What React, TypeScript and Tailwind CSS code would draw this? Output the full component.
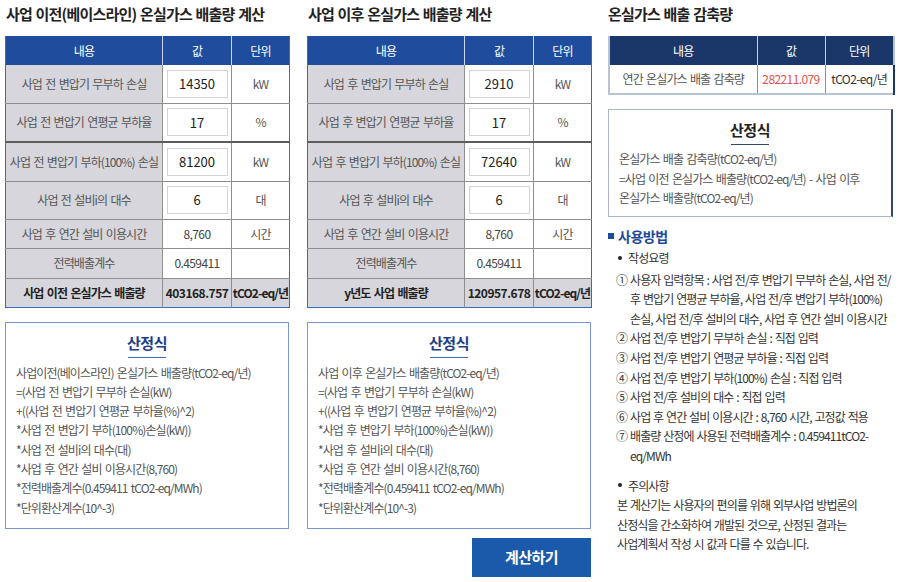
import React from "react";

type Row = {
  label: string;
  value: string;
  unit: string;
  input?: boolean;
  h: string;
  thick?: boolean;
};

const beforeRows: Row[] = [
  { label: "사업 전 변압기 무부하 손실", value: "14350", unit: "kW", input: true, h: "h-[38px]" },
  { label: "사업 전 변압기 연평균 부하율", value: "17", unit: "%", input: true, h: "h-[39px]" },
  { label: "사업 전 변압기 부하(100%) 손실", value: "81200", unit: "kW", input: true, h: "h-[39px]", thick: true },
  { label: "사업 전 설비i의 대수", value: "6", unit: "대", input: true, h: "h-[38px]" },
  { label: "사업 후 연간 설비 이용시간", value: "8,760", unit: "시간", h: "h-[29px]" },
  { label: "전력배출계수", value: "0.459411", unit: "", h: "h-[30px]" },
];

const afterRows: Row[] = [
  { label: "사업 후 변압기 무부하 손실", value: "2910", unit: "kW", input: true, h: "h-[38px]" },
  { label: "사업 후 변압기 연평균 부하율", value: "17", unit: "%", input: true, h: "h-[39px]" },
  { label: "사업 후 변압기 부하(100%) 손실", value: "72640", unit: "kW", input: true, h: "h-[39px]", thick: true },
  { label: "사업 후 설비i의 대수", value: "6", unit: "대", input: true, h: "h-[38px]" },
  { label: "사업 후 연간 설비 이용시간", value: "8,760", unit: "시간", h: "h-[29px]" },
  { label: "전력배출계수", value: "0.459411", unit: "", h: "h-[30px]" },
];

const beforeFormula = [
  "사업이전(베이스라인) 온실가스 배출량(tCO2-eq/년)",
  "=(사업 전 변압기 무부하 손실(kW)",
  "+((사업 전 변압기 연평균 부하율(%)^2)",
  "*사업 전 변압기 부하(100%)손실(kW))",
  "*사업 전 설비i의 대수(대)",
  "*사업 후 연간 설비 이용시간(8,760)",
  "*전력배출계수(0.459411 tCO2-eq/MWh)",
  "*단위환산계수(10^-3)",
];

const afterFormula = [
  "사업 이후 온실가스 배출량(tCO2-eq/년)",
  "=(사업 후 변압기 무부하 손실(kW)",
  "+((사업 후 변압기 연평균 부하율(%)^2)",
  "*사업 후 변압기 부하(100%)손실(kW))",
  "*사업 후 설비i의 대수(대)",
  "*사업 후 연간 설비 이용시간(8,760)",
  "*전력배출계수(0.459411 tCO2-eq/MWh)",
  "*단위환산계수(10^-3)",
];

const steps: { mark: string; lines: string[] }[] = [
  {
    mark: "①",
    lines: [
      "사용자 입력항목 : 사업 전/후 변압기 무부하 손실, 사업 전/",
      "후 변압기 연평균 부하율, 사업 전/후 변압기 부하(100%)",
      "손실, 사업 전/후 설비의 대수, 사업 후 연간 설비 이용시간",
    ],
  },
  { mark: "②", lines: ["사업 전/후 변압기 무부하 손실 : 직접 입력"] },
  { mark: "③", lines: ["사업 전/후 변압기 연평균 부하율 : 직접 입력"] },
  { mark: "④", lines: ["사업 전/후 변압기 부하(100%) 손실 : 직접 입력"] },
  { mark: "⑤", lines: ["사업 전/후 설비의 대수 : 직접 입력"] },
  { mark: "⑥", lines: ["사업 후 연간 설비 이용시간 : 8,760 시간, 고정값 적용"] },
  { mark: "⑦", lines: ["배출량 산정에 사용된 전력배출계수 : 0.459411tCO2-", "eq/MWh"] },
];

function Title({ children }: { children: React.ReactNode }) {
  return (
    <h2 className="h-[36px] pt-[4px] text-[15px] leading-[20px] font-bold text-[#222] tracking-[-0.8px] [word-spacing:1px]">
      {children}
    </h2>
  );
}

function CalcTable({ rows, totalLabel, totalValue }: { rows: Row[]; totalLabel: string; totalValue: string }) {
  return (
    <table className="w-[284px] border-collapse table-fixed border-x border-b border-[#3d68b8] text-[12px] tracking-[-0.9px] [word-spacing:1.5px]">
      <colgroup>
        <col className="w-[157px]" />
        <col className="w-[69px]" />
        <col className="w-[58px]" />
      </colgroup>
      <thead>
        <tr className="h-[29px] bg-[#1f4c9c] text-white">
          <th className="font-normal border-r border-[#c9d6ee]">내용</th>
          <th className="font-normal border-r border-[#c9d6ee]">값</th>
          <th className="font-normal">단위</th>
        </tr>
      </thead>
      <tbody>
        {rows.map((r, i) => (
          <tr
            key={r.label}
            className={`${r.h} ${i === 0 ? "" : r.thick ? "border-t-2 border-[#5c5c5c]" : "border-t border-[#8e8e8e]"}`}
          >
            <td className="bg-[#d6d6dc] text-center text-[#555] border-r border-[#8e8e8e] whitespace-nowrap">{r.label}</td>
            <td className="bg-white text-center border-r border-[#8e8e8e]">
              {r.input ? (
                <div className="mx-auto w-[61px] h-[28px] border border-[#d4d4d4] flex items-center justify-center text-[13px] text-[#222] tracking-normal">
                  {r.value}
                </div>
              ) : (
                <span className="text-[12px] text-[#444] tracking-[-0.6px]">{r.value}</span>
              )}
            </td>
            <td className="bg-white text-center text-[#555]">{r.unit}</td>
          </tr>
        ))}
        <tr className="h-[29px] border-t border-[#8e8e8e] bg-[#d6d6dc] font-bold text-[#222]">
          <td className="text-center border-r border-[#8e8e8e] whitespace-nowrap">{totalLabel}</td>
          <td className="text-center border-r border-[#8e8e8e] tracking-[-0.5px] whitespace-nowrap">{totalValue}</td>
          <td className="text-center tracking-[-0.9px] whitespace-nowrap px-0">tCO2-eq/년</td>
        </tr>
      </tbody>
    </table>
  );
}

function FormulaBox({ lines, className }: { lines: string[]; className: string }) {
  return (
    <div className={`border bg-white ${className}`}>
      <div className="flex flex-col items-center">
        <div className="text-[15px] font-bold text-[#1d3f86] leading-[20px] tracking-[-0.5px]">산정식</div>
        <div className="mt-[4px] w-[38px] h-[1px] bg-[#3d68b8]" />
      </div>
      <div className="mt-[5px] text-[12px] leading-[19.3px] text-[#555] tracking-[-0.9px] [word-spacing:1.5px]">
        {lines.map((l) => (
          <div key={l}>{l}</div>
        ))}
      </div>
    </div>
  );
}

function Dot({ children }: { children: React.ReactNode }) {
  return (
    <div className="pl-[10px] flex items-center">
      <span className="inline-block w-[4px] h-[4px] rounded-full bg-[#222] mr-[6px]" />
      {children}
    </div>
  );
}

export default function App() {
  return (
    <div className="w-[900px] h-[582px] bg-white font-['Noto_Sans_CJK_KR','Noto_Sans',sans-serif] flex pl-[5px]">
      <div className="w-[284px] flex flex-col">
        <div className="pl-[1px]">
          <Title>사업 이전(베이스라인) 온실가스 배출량 계산</Title>
        </div>
        <CalcTable rows={beforeRows} totalLabel="사업 이전 온실가스 배출량" totalValue="403168.757" />
        <FormulaBox
          lines={beforeFormula}
          className="mt-[14px] h-[207px] border-[#7a98d0] pt-[10px] px-[10px]"
        />
      </div>

      <div className="w-[284px] ml-[18px] flex flex-col">
        <div className="pl-[1px]">
          <Title>사업 이후 온실가스 배출량 계산</Title>
        </div>
        <CalcTable rows={afterRows} totalLabel="y년도 사업 배출량" totalValue="120957.678" />
        <FormulaBox
          lines={afterFormula}
          className="mt-[14px] h-[207px] border-[#7a98d0] pt-[10px] px-[10px]"
        />
        <div className="mt-[9px] flex justify-end">
          <button className="w-[119px] h-[39px] bg-[#1b5aaa] text-white text-[15px] font-bold tracking-[-0.5px]">
            계산하기
          </button>
        </div>
      </div>

      <div className="w-[285px] ml-[17px] flex flex-col">
        <Title>온실가스 배출 감축량</Title>
        <table className="w-[285px] border-collapse table-fixed border-x-2 border-b-2 border-[#b9c3d6] text-[12px] tracking-[-0.9px] [word-spacing:1.5px]">
          <colgroup>
            <col className="w-[148px]" />
            <col className="w-[68px]" />
            <col className="w-[69px]" />
          </colgroup>
          <thead>
            <tr className="h-[29px] bg-[#1b3769] text-white">
              <th className="font-normal border-r border-[#c9d0de]">내용</th>
              <th className="font-normal border-r border-[#c9d0de]">값</th>
              <th className="font-normal">단위</th>
            </tr>
          </thead>
          <tbody>
            <tr className="h-[29px]">
              <td className="text-center text-[#555] border-r border-[#8e8e8e] whitespace-nowrap">연간 온실가스 배출 감축량</td>
              <td className="text-center text-[#e5514f] border-r border-[#8e8e8e] tracking-[-0.6px]">282211.079</td>
              <td className="text-center text-[#333] border-r-2 border-[#1b3769] tracking-[-0.6px] whitespace-nowrap">tCO2-eq/년</td>
            </tr>
          </tbody>
        </table>

        <div className="mt-[14px] h-[108px] border border-[#a9b4c9] border-r-2 border-r-[#33466f] pt-[10px] px-[10px]">
          <div className="flex flex-col items-center">
            <div className="text-[15px] font-bold text-[#222] leading-[20px] tracking-[-0.5px]">산정식</div>
            <div className="mt-[4px] w-[38px] h-[1px] bg-[#33466f]" />
          </div>
          <div className="mt-[4px] text-[12px] leading-[19.5px] text-[#555] tracking-[-0.9px] [word-spacing:1.5px]">
            <div>온실가스 배출 감축량(tCO2-eq/년)</div>
            <div>=사업 이전 온실가스 배출량(tCO2-eq/년) - 사업 이후</div>
            <div>온실가스 배출량(tCO2-eq/년)</div>
          </div>
        </div>

        <div className="mt-[9px] text-[12px] leading-[19.6px] text-[#333] tracking-[-0.9px] [word-spacing:1px] whitespace-nowrap">
          <div className="flex items-center text-[14px] font-bold text-[#1d4a9a] leading-[20px] tracking-[-0.5px]">
            <span className="inline-block w-[6px] h-[6px] bg-[#1d4a9a] mr-[4px]" />
            사용방법
          </div>
          <div className="mt-[2px]">
            <Dot>작성요령</Dot>
          </div>
          <div className="mt-[2px] pl-[8px]">
            {steps.map((s) => (
              <div key={s.mark} className="flex">
                <span className="w-[14px] shrink-0">{s.mark}</span>
                <div>
                  {s.lines.map((l) => (
                    <div key={l}>{l}</div>
                  ))}
                </div>
              </div>
            ))}
          </div>
          <div className="mt-[10px]">
            <Dot>주의사항</Dot>
          </div>
          <div className="pl-[9px]">
            <div>본 계산기는 사용자의 편의를 위해 외부사업 방법론의</div>
            <div>산정식을 간소화하여 개발된 것으로, 산정된 결과는</div>
            <div>사업계획서 작성 시 값과 다를 수 있습니다.</div>
          </div>
        </div>
      </div>
    </div>
  );
}
